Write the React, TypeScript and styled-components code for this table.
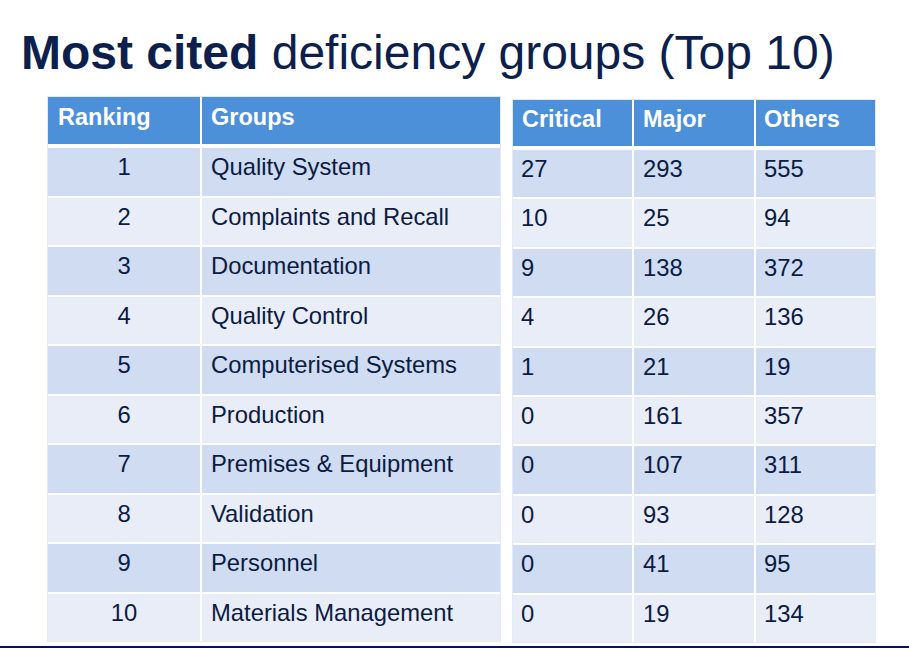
import React from "react";
import styled, { createGlobalStyle } from "styled-components";

const Global = createGlobalStyle`
  html, body { margin: 0; padding: 0; background: #ffffff; }
  body { font-family: "Liberation Sans", Arial, sans-serif; }
`;

const Slide = styled.div`
  width: 909px;
  height: 648px;
  display: flex;
  flex-direction: column;
  background: #ffffff;
  overflow: hidden;
`;

const Title = styled.h1`
  margin: 0;
  padding: 25px 0 0 21px;
  height: 75px;
  box-sizing: border-box;
  font-size: 48px;
  line-height: 55px;
  font-weight: 400;
  color: #0c1f4d;
  white-space: nowrap;
  b { font-weight: 700; }
`;

const Tables = styled.div`
  display: flex;
  align-items: flex-start;
  gap: 13px;
  padding: 22px 0 0 48px;
`;

const Table = styled.div<{ $top: number }>`
  display: flex;
  flex-direction: column;
  gap: 2px;
  margin-top: ${(p) => p.$top}px;
  background: #ffffff;
  outline: 1px solid #e4eaf5;
`;

const Row = styled.div<{ $cols: string; $h: number; $head?: boolean }>`
  display: grid;
  grid-template-columns: ${(p) => p.$cols};
  column-gap: 2px;
  height: ${(p) => p.$h}px;
  margin-bottom: ${(p) => (p.$head ? 2 : 0)}px;
`;

const Cell = styled.div<{ $kind: "head" | "odd" | "even"; $center?: boolean; $pt: number; $pl: number }>`
  display: flex;
  align-items: flex-start;
  justify-content: ${(p) => (p.$center ? "center" : "flex-start")};
  padding: ${(p) => p.$pt}px 0 0 ${(p) => (p.$center ? 0 : p.$pl)}px;
  box-sizing: border-box;
  background: ${(p) =>
    p.$kind === "head" ? "#4c90da" : p.$kind === "odd" ? "#cfdcf1" : "#e8edf7"};
  color: ${(p) => (p.$kind === "head" ? "#ffffff" : "#0b1b42")};
  font-size: ${(p) => (p.$kind === "head" ? "23.5px" : "23.8px")};
  font-weight: ${(p) => (p.$kind === "head" ? 700 : 400)};
  line-height: 28px;
  white-space: nowrap;
`;

const BottomRule = styled.div`
  margin-top: auto;
  height: 2px;
  background: #0c0c6e;
`;

const rows: [string, string, string, string, string][] = [
  ["1", "Quality System", "27", "293", "555"],
  ["2", "Complaints and Recall", "10", "25", "94"],
  ["3", "Documentation", "9", "138", "372"],
  ["4", "Quality Control", "4", "26", "136"],
  ["5", "Computerised Systems", "1", "21", "19"],
  ["6", "Production", "0", "161", "357"],
  ["7", "Premises & Equipment", "0", "107", "311"],
  ["8", "Validation", "0", "93", "128"],
  ["9", "Personnel", "0", "41", "95"],
  ["10", "Materials Management", "0", "19", "134"],
];

const LEFT_COLS = "152px 298px";
const RIGHT_COLS = "119px 120px 119px";

export default function App() {
  return (
    <>
      <Global />
      <Slide>
        <Title>
          <b>Most cited</b> deficiency groups (Top 10)
        </Title>
        <Tables>
          <Table $top={0}>
            <Row $cols={LEFT_COLS} $h={47} $head>
              <Cell $kind="head" $pt={6} $pl={10}>Ranking</Cell>
              <Cell $kind="head" $pt={6} $pl={9}>Groups</Cell>
            </Row>
            {rows.map((r, i) => {
              const k = i % 2 === 0 ? "odd" : "even";
              return (
                <Row key={r[0]} $cols={LEFT_COLS} $h={47.5}>
                  <Cell $kind={k} $center $pt={5} $pl={0}>{r[0]}</Cell>
                  <Cell $kind={k} $pt={5} $pl={9}>{r[1]}</Cell>
                </Row>
              );
            })}
          </Table>
          <Table $top={3}>
            <Row $cols={RIGHT_COLS} $h={46} $head>
              <Cell $kind="head" $pt={5} $pl={9}>Critical</Cell>
              <Cell $kind="head" $pt={5} $pl={9}>Major</Cell>
              <Cell $kind="head" $pt={5} $pl={8}>Others</Cell>
            </Row>
            {rows.map((r, i) => {
              const k = i % 2 === 0 ? "odd" : "even";
              return (
                <Row key={r[0]} $cols={RIGHT_COLS} $h={47.4}>
                  <Cell $kind={k} $pt={5} $pl={8}>{r[2]}</Cell>
                  <Cell $kind={k} $pt={5} $pl={9}>{r[3]}</Cell>
                  <Cell $kind={k} $pt={5} $pl={8}>{r[4]}</Cell>
                </Row>
              );
            })}
          </Table>
        </Tables>
        <BottomRule />
      </Slide>
    </>
  );
}
